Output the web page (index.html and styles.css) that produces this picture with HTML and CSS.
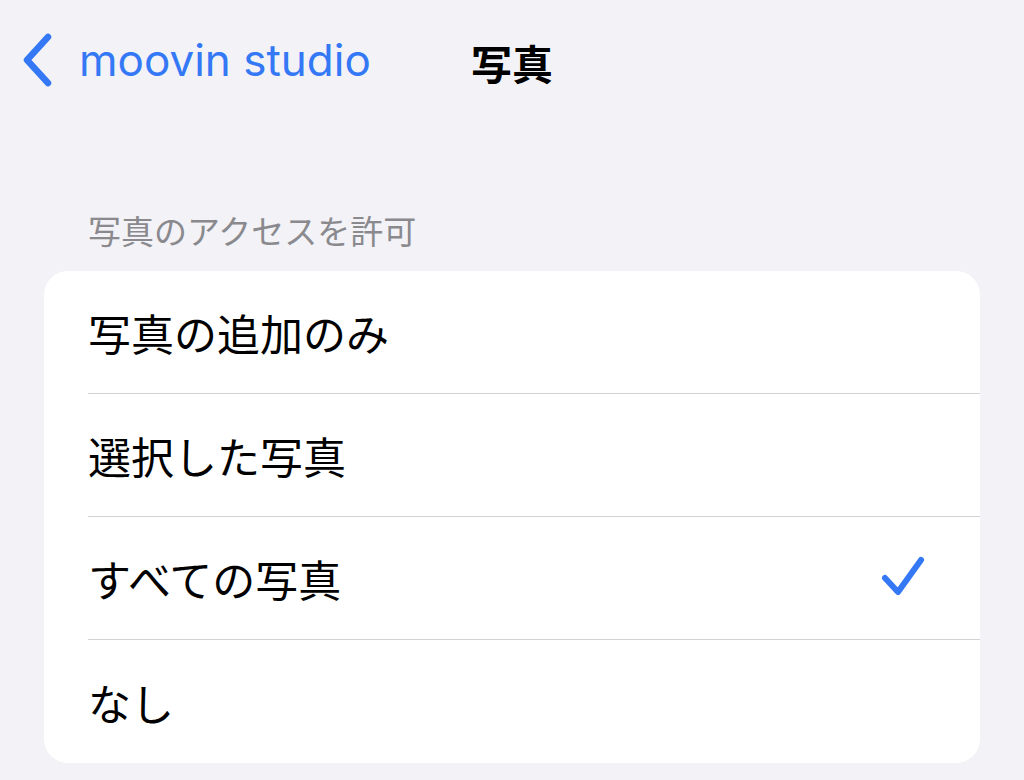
FILE: index.html
```html
<!DOCTYPE html>
<html lang="ja">
<head>
<meta charset="utf-8">
<title>写真</title>
<link rel="stylesheet" href="styles.css">
</head>
<body>
<div class="screen">
  <header class="nav">
    <div class="nav-left">
      <a class="back" href="#">
        <svg class="chev" width="30" height="54" viewBox="0 0 30 54"><path d="M25 4 L4 27 L25 50" fill="none" stroke="#3478f6" stroke-width="6.5" stroke-linecap="round" stroke-linejoin="round"/></svg>
        <span class="back-label">moovin studio</span>
      </a>
    </div>
    <h1 class="nav-title">写真</h1>
    <div class="nav-right"></div>
  </header>

  <section class="group">
    <div class="group-header">写真のアクセスを許可</div>
    <ul class="card">
      <li class="row"><div class="row-inner"><span class="row-label">写真の追加のみ</span></div></li>
      <li class="row"><div class="row-inner"><span class="row-label">選択した写真</span></div></li>
      <li class="row"><div class="row-inner"><span class="row-label">すべての写真</span>
        <svg class="check" width="46" height="46" viewBox="0 0 46 46"><path d="M4 23 L17 37 L40 5" fill="none" stroke="#3478f6" stroke-width="6" stroke-linecap="round" stroke-linejoin="round"/></svg>
      </div></li>
      <li class="row"><div class="row-inner"><span class="row-label">なし</span></div></li>
    </ul>
  </section>
</div>
</body>
</html>
```

FILE: styles.css
```css
* { box-sizing: border-box; }
html, body {
  margin: 0;
  padding: 0;
  background: #f2f2f7;
}
body {
  width: 1024px;
  height: 780px;
  overflow: hidden;
  font-family: "Inter", "Noto Sans CJK JP", sans-serif;
  color: #000;
}
.screen {
  display: flex;
  flex-direction: column;
}
.nav {
  height: 124px;
  display: grid;
  grid-template-columns: 1fr auto 1fr;
  align-items: center;
}
.nav-left {
  padding-left: 23px;
}
.back {
  display: inline-flex;
  align-items: center;
  gap: 26px;
  text-decoration: none;
  color: #3478f6;
}
.chev { display: block; }
.back-label {
  font-family: "Inter", sans-serif;
  font-size: 44px;
  letter-spacing: 0;
  line-height: 1;
}
.nav-title {
  margin: 0;
  font-family: "Noto Sans CJK JP", sans-serif;
  font-weight: 700;
  font-size: 41px;
  line-height: 1;
}
.group {
  padding-top: 86px;
}
.group-header {
  padding-left: 88px;
  font-family: "Noto Sans CJK JP", sans-serif;
  font-size: 33px;
  line-height: 40px;
  color: #8a8a8e;
  height: 61px;
}
.card {
  list-style: none;
  margin: 0 0 0 44px;
  padding: 0;
  width: 936px;
  background: #fff;
  border-radius: 24px;
  overflow: hidden;
}
.row {
  padding-left: 44px;
}
.row-inner {
  height: 123px;
  display: flex;
  align-items: center;
  justify-content: space-between;
  padding-right: 53px;
  border-bottom: 1.5px solid #d1d1d6;
}
.row:last-child .row-inner {
  border-bottom: none;
}
.row-label {
  font-family: "Noto Sans CJK JP", sans-serif;
  font-size: 43px;
  line-height: 1;
  padding-top: 1px;
}
.check { display: block; }
```
